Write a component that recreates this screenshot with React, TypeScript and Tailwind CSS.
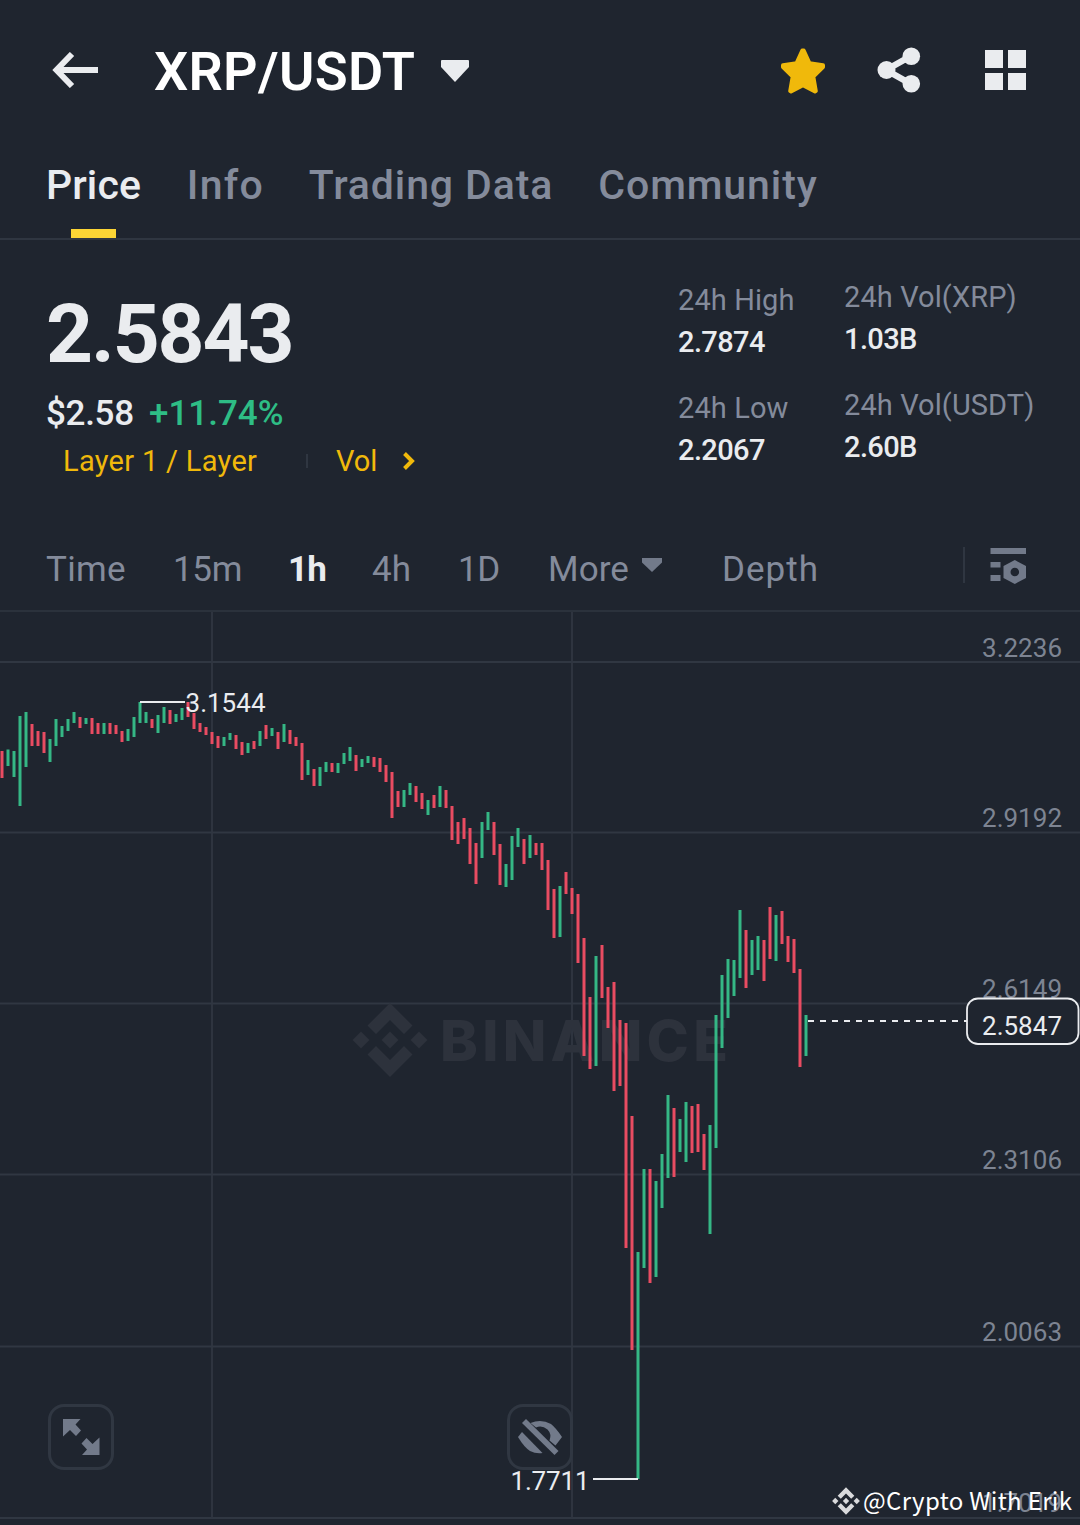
type Candle = [top: number, bottom: number, dir: "u" | "d"];

const TABS = [
  { label: "Price", cls: "w-[95px] tracking-[0.1px]" },
  { label: "Info", cls: "w-[77px] tracking-[1.3px]" },
  { label: "Trading Data", cls: "w-[242px] tracking-[0.9px]" },
  { label: "Community", cls: "w-[220px] tracking-[0.9px]" },
];

const STATS = [
  [
    { label: "24h High", value: "2.7874" },
    { label: "24h Low", value: "2.2067" },
  ],
  [
    { label: "24h Vol(XRP)", value: "1.03B" },
    { label: "24h Vol(USDT)", value: "2.60B" },
  ],
];

const GRID_Y = [662, 832.5, 1003.5, 1174.5, 1346.5, 1518];
const GRID_X = [212, 572];

const AXIS = [
  { y: 657, label: "3.2236" },
  { y: 827, label: "2.9192" },
  { y: 998, label: "2.6149" },
  { y: 1169, label: "2.3106" },
  { y: 1341, label: "2.0063" },
  { y: 1512, label: "1.7019" },
];

// one bar every 6px, first one centered at x=2
const CANDLES: Candle[] = [
  [751, 778, "d"], [749.5, 766, "u"], [751, 777, "u"], [716, 806, "u"], [712, 767, "u"],
  [724, 746, "d"], [731, 746, "d"], [732, 753, "d"], [739, 762, "u"], [719, 746, "u"],
  [726, 737, "u"], [719, 731, "u"], [712, 723, "u"], [717, 728, "d"], [718, 724, "u"],
  [718, 734, "d"], [723, 734, "d"], [723, 734, "u"], [723, 734, "d"], [725, 734, "d"],
  [731, 742, "d"], [729, 741, "u"], [717, 737, "u"], [702, 723, "u"], [712, 723, "u"],
  [719, 728, "d"], [715, 733, "u"], [707, 723, "u"], [710, 724, "d"], [714, 722, "u"],
  [708, 720, "u"], [702, 717, "d"], [713, 729, "d"], [723, 732, "d"], [727, 735, "d"],
  [732, 744, "d"], [736, 748, "d"], [737, 746, "u"], [733, 740, "u"], [735, 749, "d"],
  [742, 755, "d"], [743, 753, "u"], [741, 749, "d"], [731, 746, "u"], [725, 739, "d"],
  [728, 736, "u"], [732, 749, "d"], [724, 742, "u"], [730, 744, "d"], [737, 746, "d"],
  [743, 780, "d"], [760, 775, "u"], [769, 786, "d"], [767, 786, "u"], [762, 772, "u"],
  [763, 772, "d"], [763, 773, "u"], [753, 764, "u"], [747, 761, "u"], [755, 771, "d"],
  [759, 767, "u"], [756, 763, "u"], [757, 767, "d"], [758, 772, "d"], [765, 782, "d"],
  [772, 818, "d"], [791, 807, "d"], [790, 807, "u"], [783, 795, "u"], [786, 802, "d"],
  [793, 809, "d"], [800, 815, "u"], [795, 808, "d"], [786, 807, "u"], [790, 808, "d"],
  [806, 840, "d"], [822, 844, "d"], [818, 839, "d"], [828, 864, "d"], [843, 884, "d"],
  [822, 858, "u"], [812, 830, "u"], [822, 855, "d"], [844, 885, "d"], [864, 887, "u"],
  [836, 880, "u"], [828, 847, "u"], [839, 864, "d"], [835, 858, "u"], [843, 855, "d"],
  [843, 870, "d"], [860, 910, "d"], [889, 938, "d"], [886, 937, "u"], [872, 894, "d"],
  [888, 914, "d"], [894, 963, "d"], [938, 1056, "d"], [997, 1069, "d"], [956, 1066, "u"],
  [945, 998, "d"], [987, 1028, "d"], [982, 1091, "d"], [1020, 1086, "d"], [1023, 1248, "d"],
  [1116, 1350, "d"], [1252, 1479, "u"], [1169, 1268, "u"], [1169, 1283, "d"], [1181, 1277, "u"],
  [1154, 1208, "u"], [1095, 1178, "u"], [1108, 1177, "d"], [1119, 1152, "u"], [1102, 1162, "u"],
  [1106, 1153, "d"], [1104, 1152, "d"], [1134, 1170, "d"], [1125, 1234, "u"], [1015, 1148, "u"],
  [975, 1048, "u"], [959, 1018, "u"], [960, 996, "u"], [910, 978, "u"], [930, 988, "d"],
  [940, 975, "u"], [936, 970, "u"], [940, 981, "d"], [907, 959, "d"], [915, 961, "u"],
  [911, 944, "d"], [936, 962, "d"], [939, 973, "d"], [969, 1067, "d"], [1015, 1056, "u"],
];

export default function App() {
  return (
    <div className="w-[1080px] h-[1525px] overflow-hidden bg-[#1f252f] text-[#eaecef] font-['Roboto',sans-serif]">
      <Header />
      <Tabs />
      <PriceSummary />
      <Toolbar />
      <Chart />
    </div>
  );
}

function Header() {
  return (
    <header className="h-36 flex items-center pl-[52px] pr-[54px]">
      <svg className="w-[46px] h-9 -mt-1" viewBox="0 0 46 36" fill="none" stroke="#eaecef" strokeWidth="6">
        <path d="M4 18H46M20 2L4.5 18L20 34" />
      </svg>
      <h1 className="ml-14 w-[263px] text-[54px] leading-[64px] font-semibold text-white whitespace-nowrap tracking-[0.3px]">
        XRP/USDT
      </h1>
      <svg className="ml-6 w-7 h-[22px] -mt-0.5" viewBox="0 0 28 22" fill="#eaecef">
        <path d="M1 0H27Q28 0 28 1V7L14 22L0 7V1Q0 0 1 0Z" />
      </svg>

      <div className="ml-auto flex items-center">
        <svg className="w-[46px] h-12 -mt-0.5" viewBox="0 0 46 48" fill="#f0b90b" stroke="#f0b90b" strokeWidth="4" strokeLinejoin="round">
          <path d="M22.3 3.5H23.7L29.5 16.3L43 18.3V20L33.3 29.5L35.8 44L35 44.4L23 38.2L11 44.4L10.2 44L12.7 29.5L3 20V18.3L16.5 16.3Z" />
        </svg>
        <svg className="ml-[51px] w-11 h-12 -mt-1" viewBox="0 0 44 48" fill="#eaecef">
          <path d="M9 24L34 10M9 24L34 38" stroke="#eaecef" strokeWidth="6.5" />
          <circle cx="9.5" cy="24" r="9" />
          <circle cx="34.3" cy="10.3" r="8.8" />
          <circle cx="34.3" cy="37.8" r="8.8" />
        </svg>
        <div className="ml-16 -mt-1 grid grid-cols-2 gap-[5px] w-[41px]">
          <span className="h-[17.5px] bg-[#eaecef]" />
          <span className="h-[17.5px] bg-[#eaecef]" />
          <span className="h-[17.5px] bg-[#eaecef]" />
          <span className="h-[17.5px] bg-[#eaecef]" />
        </div>
      </div>
    </header>
  );
}

function Tabs() {
  return (
    <nav className="h-24 pt-4 pl-[46px] flex gap-[46px] border-b-2 border-[#2f3641]">
      {TABS.map((t, i) => (
        <div key={t.label} className={`flex flex-col items-center text-[41px] leading-[50px] font-medium ${t.cls}`}>
          <span className={`whitespace-nowrap ${i === 0 ? "text-[#eaecef]" : "text-[#848b9b]"}`}>{t.label}</span>
          {i === 0 && <span className="mt-[19px] h-[9px] w-[45px] bg-[#fcd535]" />}
        </div>
      ))}
    </nav>
  );
}

function PriceSummary() {
  return (
    <section className="h-[286px] flex">
      <div className="w-[678px] pt-11 pl-[46px]">
        <div className="text-[82px] leading-[100px] font-bold tracking-[-2.1px]">2.5843</div>
        <div className="mt-2 flex text-[35px] leading-[44px] font-medium">
          <span className="w-[103px] tracking-[-0.3px]">$2.58</span>
          <span className="text-[#2ebd85]">+11.74%</span>
        </div>
        <div className="mt-[7px] pl-[17px] flex items-center text-[29px] leading-9 text-[#f0b90b]">
          <span className="w-[243px] tracking-[0.3px]">Layer 1 / Layer</span>
          <span className="w-0.5 h-3.5 bg-[#2f3641]" />
          <span className="ml-7 w-[67px]">Vol</span>
          <svg className="w-3 h-[18px]" viewBox="0 0 12 18" fill="none" stroke="#f0b90b" strokeWidth="4">
            <path d="M1.5 1.5L9 9L1.5 16.5" />
          </svg>
        </div>
      </div>

      {STATS.map((col, i) => (
        <div key={i} className={`flex flex-col gap-6 text-[29px] leading-[42px] ${i === 0 ? "w-[166px] pt-[39px]" : "pt-9"}`}>
          {col.map((s) => (
            <div key={s.label} className="whitespace-nowrap">
              <div className="text-[#848b9b] tracking-[0.1px]">{s.label}</div>
              <div className="font-medium tracking-[-0.6px]">{s.value}</div>
            </div>
          ))}
        </div>
      ))}
    </section>
  );
}

function Toolbar() {
  return (
    <div className="h-[86px] pt-1 pl-[46px] flex items-center border-b-2 border-[#2b323c] text-[35px] leading-[42px] text-[#848b9b] whitespace-nowrap">
      <span className="w-[127px] tracking-[0.3px]">Time</span>
      <span className="w-[115px] tracking-[-0.3px]">15m</span>
      <span className="w-[84px] font-bold text-[#eaecef] tracking-[-0.8px]">1h</span>
      <span className="w-[86px]">4h</span>
      <span className="w-[90px] tracking-[-0.5px]">1D</span>
      <span className="w-[94px] tracking-[0.1px]">More</span>
      <svg className="w-5 h-3.5 -mt-2.5" viewBox="0 0 20 14" fill="#727a8a">
        <path d="M0 0H20V4.5L10 14L0 4.5Z" />
      </svg>
      <span className="ml-[60px] w-[241px] tracking-[1px]">Depth</span>
      <span className="w-0.5 h-9 -mt-2.5 bg-[#2f3641]" />
      <svg className="ml-[25px] w-9 h-9 -mt-2" viewBox="-0.5 0 36 36" fill="#727a8a">
        <path d="M0 0H35.500V6H0ZM0 14H10V19.500H0ZM0 27H10V33H0Z" />
        <path
          fillRule="evenodd"
          d="M24.300 12L35.500 18V30L24.300 36L13 30V18ZM24.300 19.700A4.300 4.300 0 1 0 24.300 28.300A4.300 4.300 0 1 0 24.300 19.700Z"
        />
      </svg>
    </div>
  );
}

function Chart() {
  return (
    <div className="relative h-[913px]">
      <svg className="block w-full h-full" viewBox="0 612 1080 913">
        {/* grid */}
        <g stroke="#303742" strokeWidth="1.8">
          {GRID_Y.map((y) => (
            <line key={y} x1="0" x2="1080" y1={y} y2={y} />
          ))}
          {GRID_X.map((x) => (
            <line key={x} x1={x} x2={x} y1="612" y2="1518" />
          ))}
        </g>

        {/* watermark */}
        <g fill="#2d323c">
          <BinanceMark cx={390} cy={1040} scale={1} />
          <text x="440" y="1061" fontSize="57" fontWeight="800" textLength="288" className="font-['Inter',sans-serif]">
            BINANCE
          </text>
        </g>

        {/* axis labels */}
        <g fill="#7d8492" fontSize="26">
          {AXIS.map((a) => (
            <text key={a.label} x="982" y={a.y} textLength="80">
              {a.label}
            </text>
          ))}
        </g>

        {CANDLES.map(([top, bottom, dir], i) => (
          <rect key={i} x={0.5 + i * 6} y={top} width="3" height={bottom - top} fill={dir === "u" ? "#35b785" : "#e94c62"} />
        ))}

        {/* high / low markers */}
        <g fill="#eaecef" fontSize="26">
          <path d="M140 702H185M593 1479H638" stroke="#eaecef" strokeWidth="1.8" />
          <text x="185.500" y="712" textLength="80">3.1544</text>
          <text x="510.500" y="1490" textLength="79">1.7711</text>
        </g>

        {/* last price */}
        <line x1="808" x2="967" y1="1021" y2="1021" stroke="#eaecef" strokeWidth="1.8" strokeDasharray="6 6" />
        <rect x="967" y="998.5" width="111.5" height="45.5" rx="11" fill="#1f252f" stroke="#eaecef" strokeWidth="1.8" />
        <text x="982" y="1035" fontSize="26" fill="#eaecef" textLength="80">2.5847</text>

        {/* author */}
        <g fill="#d9dadc">
          <BinanceMark cx={846} cy={1501} scale={0.37} />
        </g>
        <text x="863" y="1510" fontSize="24" fontWeight="400" fill="#fff" textLength="209" className="font-['Noto_Sans_CJK_SC',sans-serif]">
          @Crypto With Erik
        </text>
      </svg>

      <button className="absolute left-12 top-[792px] size-[66px] rounded-2xl border-[3px] border-[#303742]">
        <svg className="size-full" viewBox="51 1407 60 60" fill="#727a8a">
          <path d="M63 1419H80.5L75.5 1424.5L81 1430.5L76 1436L70 1430L63 1436.5Z" />
          <path d="M99.5 1455H82L87 1449.5L81.5 1443.5L86.5 1438L92.5 1444L99.5 1437.5Z" />
        </svg>
      </button>
      <button className="absolute left-[507px] top-[792px] size-[66px] rounded-2xl border-[3px] border-[#303742]">
        <svg className="size-full" viewBox="510 1407 60 60" fill="#727a8a">
          <path d="M526 1419L558.5 1451L554.5 1455L522 1423Z" />
          <path d="M530.5 1423Q541 1418.500 551 1424Q556 1428 562 1437L555.500 1445.500L549.500 1440.500Q552 1434 547.500 1429.500Q542 1425 536 1427.500Z" />
          <path d="M522 1432L518 1437Q524 1447 530 1451Q536 1454 542.500 1453Z" />
        </svg>
      </button>
    </div>
  );
}

function BinanceMark({ cx, cy, scale }: { cx: number; cy: number; scale: number }) {
  return (
    <g transform={`translate(${cx} ${cy}) scale(${scale})`}>
      <path d="M0 -37L22.500 -14.500L14 -6L0 -20L-14 -6L-22.500 -14.500Z" />
      <path d="M0 37L22.500 14.500L14 6L0 20L-14 6L-22.500 14.500Z" />
      <path d="M0 -8.500L8.500 0L0 8.500L-8.500 0Z" />
      <path d="M-29 -8.500L-20.500 0L-29 8.500L-37.500 0Z" />
      <path d="M29 -8.500L37.500 0L29 8.500L20.500 0Z" />
    </g>
  );
}
